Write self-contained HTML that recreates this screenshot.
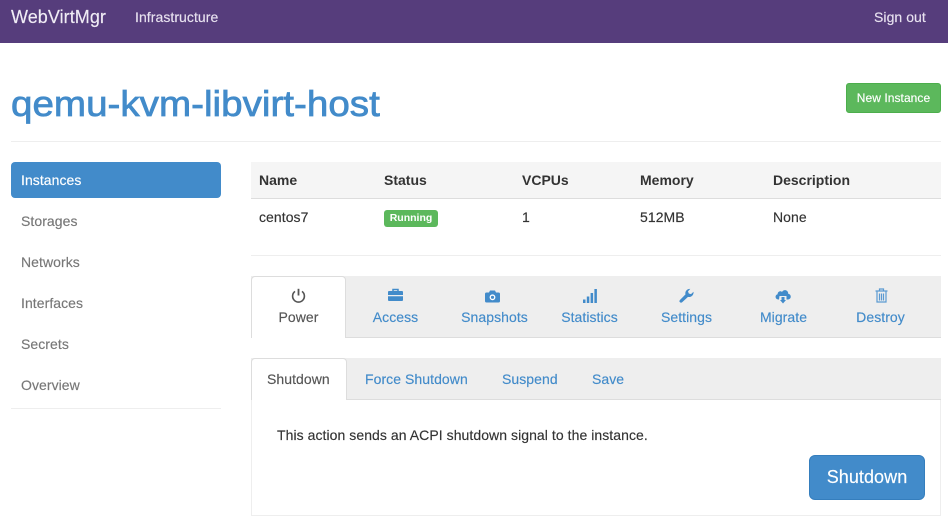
<!DOCTYPE html>
<html><head><meta charset="utf-8">
<style>
html,body{margin:0;padding:0;background:#fff;width:948px;height:524px;overflow:hidden}
body{font-family:"Liberation Sans",Arial,sans-serif;font-size:14px;color:#333;position:relative;letter-spacing:.06px;-webkit-text-stroke:.15px currentColor}
.a{position:absolute;white-space:nowrap}
.l{color:#428bca}
.g{color:#777}
.b{font-weight:bold;letter-spacing:0;-webkit-text-stroke:0}
.c{transform:translateX(-50%)}
svg{position:absolute;display:block}
</style></head><body>
<div class="a" style="left:0;top:0;width:948px;height:43px;background:#563d7c"></div>
<div class="a" style="left:11px;top:7px;font-size:18px;line-height:20px;color:#f0ecf5">WebVirtMgr</div>
<div class="a" style="left:135px;top:7px;line-height:20px;color:#e8e2f0">Infrastructure</div>
<div class="a" style="left:874px;top:7px;line-height:20px;color:#e8e2f0">Sign out</div>

<div class="a l" style="left:11px;top:84px;font-size:36px;line-height:40px;letter-spacing:0;-webkit-text-stroke:.75px #428bca;transform:scaleX(1.072);transform-origin:0 0">qemu-kvm-libvirt-host</div>
<div class="a" style="left:846px;top:83px;width:95px;height:30px;box-sizing:border-box;background:#5cb85c;border:1px solid #4cae4c;border-radius:3px;color:#fff;font-size:12px;line-height:28px;text-align:center">New Instance</div>
<div class="a" style="left:11px;top:141px;width:930px;height:1px;background:#eee"></div>

<div class="a" style="left:11px;top:162px;width:210px;height:36px;background:#428bca;border-radius:4px"></div>
<div class="a" style="left:21px;top:170px;line-height:20px;color:#fff">Instances</div>
<div class="a g" style="left:21px;top:211px;line-height:20px">Storages</div>
<div class="a g" style="left:21px;top:252px;line-height:20px">Networks</div>
<div class="a g" style="left:21px;top:293px;line-height:20px">Interfaces</div>
<div class="a g" style="left:21px;top:334px;line-height:20px">Secrets</div>
<div class="a g" style="left:21px;top:375px;line-height:20px">Overview</div>
<div class="a" style="left:11px;top:408px;width:210px;height:1px;background:#eee"></div>

<div class="a" style="left:251px;top:162px;width:690px;height:36px;background:#f5f5f5"></div>
<div class="a" style="left:251px;top:198px;width:690px;height:1px;background:#ddd"></div>
<div class="a b" style="left:259px;top:170px;line-height:20px">Name</div>
<div class="a b" style="left:384px;top:170px;line-height:20px">Status</div>
<div class="a b" style="left:522px;top:170px;line-height:20px">VCPUs</div>
<div class="a b" style="left:640px;top:170px;line-height:20px">Memory</div>
<div class="a b" style="left:773px;top:170px;line-height:20px">Description</div>
<div class="a" style="left:259px;top:207px;line-height:20px">centos7</div>
<div class="a b" style="left:384px;top:210px;width:54px;height:17px;background:#5cb85c;border-radius:3px;color:#fff;font-size:10.5px;line-height:17px;text-align:center">Running</div>
<div class="a" style="left:522px;top:207px;line-height:20px">1</div>
<div class="a" style="left:640px;top:207px;line-height:20px">512MB</div>
<div class="a" style="left:773px;top:207px;line-height:20px">None</div>
<div class="a" style="left:251px;top:255px;width:690px;height:1px;background:#eee"></div>

<div class="a" style="left:251px;top:276px;width:690px;height:61px;background:#eee"></div>
<div class="a" style="left:251px;top:337px;width:690px;height:1px;background:#ddd"></div>
<div class="a" style="left:251px;top:276px;width:95px;height:62px;box-sizing:border-box;background:#fff;border:1px solid #ddd;border-bottom:0;border-radius:4px 4px 0 0"></div>
<div class="a c" style="left:298.5px;top:307px;line-height:20px;color:#555">Power</div>
<div class="a c l" style="left:395.5px;top:307px;line-height:20px">Access</div>
<div class="a c l" style="left:494.500px;top:307px;line-height:20px">Snapshots</div>
<div class="a c l" style="left:589.500px;top:307px;line-height:20px">Statistics</div>
<div class="a c l" style="left:686.500px;top:307px;line-height:20px">Settings</div>
<div class="a c l" style="left:783.500px;top:307px;line-height:20px">Migrate</div>
<div class="a c l" style="left:880.500px;top:307px;line-height:20px">Destroy</div>

<svg style="left:291px;top:288px" width="15" height="16" viewBox="0 0 15 16"><path d="M4 3.400A5.900 5.900 0 1 0 11 3.400" fill="none" stroke="#555" stroke-width="1.600"/><path d="M7.500 .8V7.500" fill="none" stroke="#555" stroke-width="1.800"/></svg>
<svg style="left:388px;top:288px" width="15" height="14" viewBox="0 0 15 14"><path d="M5 3V1.500H10V3" fill="none" stroke="#428bca" stroke-width="1.500"/><path d="M1 3H14Q15 3 15 4V7H0V4Q0 3 1 3ZM0 8.300H15V12Q15 13 14 13H1Q0 13 0 12Z" fill="#428bca"/></svg>
<svg style="left:485px;top:290px" width="15" height="13" viewBox="0 0 15 13"><path d="M1.500 2.500H4L5 .5H10L11 2.500H13.500Q15 2.500 15 4V11Q15 12.500 13.500 12.500H1.500Q0 12.500 0 11V4Q0 2.500 1.500 2.500Z" fill="#428bca"/><circle cx="7.500" cy="7.300" r="2.900" fill="#fff"/><circle cx="7.500" cy="7.300" r="1.600" fill="#428bca"/></svg>
<svg style="left:583px;top:289px" width="14" height="14" viewBox="0 0 14 14"><path d="M0 10.500H2.500V14H0ZM3.800 7.500H6.300V14H3.800ZM7.600 4H10.100V14H7.600ZM11.400 0H13.900V14H11.400Z" fill="#428bca"/></svg>
<svg style="left:679px;top:288px" width="15" height="15" viewBox="0 0 15 15"><path d="M.7 12.200L6.500 6.400C5.700 3.800 7.800 .6 11.300 .9L9 3.400L9.800 5.500L12 6.100L14.500 3.700C15 7 12 9.700 9 8.900L3 14.400Q2 15 1 14.200Q0 13.200 .7 12.200Z" fill="#428bca"/></svg>
<svg style="left:775px;top:288px" width="16" height="16" viewBox="0 0 16 16"><path d="M4 11.500H3.500C0 11.500 -.5 7 2.600 6.300C2.600 3.500 5.500 2.500 7 4C8.300 .8 13.400 1.700 13.200 5.700C16.800 6.300 16.600 11.500 12.500 11.500H11.500V8H4.500Z" fill="#428bca"/><path d="M6.500 9H9.500V12H11L8 15.500L5 12H6.500Z" fill="#428bca"/></svg>
<svg style="left:875px;top:288px" width="13" height="15" viewBox="0 0 13 15"><path d="M.5 3H12.500M4.500 3V1H8.500V3M2 3.500V14H11V3.500M4.500 5.500V12.500M6.500 5.500V12.500M8.500 5.500V12.500" fill="none" stroke="#5b9ad2" stroke-width="1.200"/></svg>

<div class="a" style="left:251px;top:358px;width:690px;height:158px;box-sizing:border-box;border:1px solid #eee;border-top:0"></div>
<div class="a" style="left:251px;top:358px;width:690px;height:41px;background:#eee"></div>
<div class="a" style="left:251px;top:399px;width:690px;height:1px;background:#ddd"></div>
<div class="a" style="left:251px;top:358px;width:96px;height:42px;box-sizing:border-box;background:#fff;border:1px solid #ddd;border-bottom:0;border-radius:4px 4px 0 0"></div>
<div class="a" style="left:267px;top:369px;line-height:20px;color:#555">Shutdown</div>
<div class="a l" style="left:365px;top:369px;line-height:20px">Force Shutdown</div>
<div class="a l" style="left:502px;top:369px;line-height:20px">Suspend</div>
<div class="a l" style="left:592px;top:369px;line-height:20px">Save</div>
<div class="a" style="left:277px;top:425px;line-height:20px">This action sends an ACPI shutdown signal to the instance.</div>
<div class="a" style="left:809px;top:455px;width:116px;height:45px;box-sizing:border-box;background:#428bca;border:1px solid #357ebd;border-radius:6px;color:#fff;font-size:18px;line-height:43px;text-align:center">Shutdown</div>
</body></html>
